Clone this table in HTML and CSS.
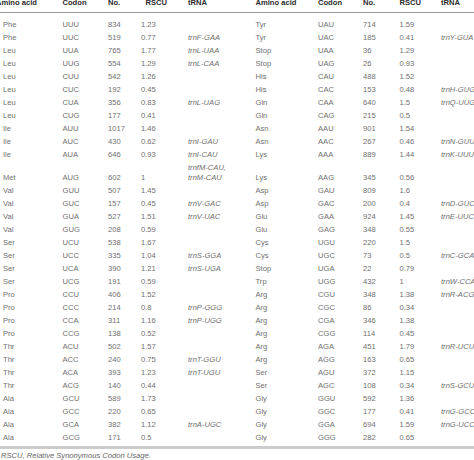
FILE: index.html
```html
<!DOCTYPE html>
<html>
<head>
<meta charset="utf-8">
<link rel="stylesheet" href="styles.css">
</head>
<body>
<div class="page">
<table class="codon">
<colgroup>
<col class="w-aa1"><col class="w-cod"><col class="w-no1"><col class="w-rs1"><col class="w-tr1">
<col class="w-aa2"><col class="w-cod2"><col class="w-no2"><col class="w-rs2"><col class="w-tr2">
</colgroup>
<thead>
<tr>
<th class="aa1">Amino acid</th><th>Codon</th><th>No.</th><th class="rs1">RSCU</th><th>tRNA</th>
<th>Amino acid</th><th>Codon</th><th>No.</th><th>RSCU</th><th>tRNA</th>
</tr>
</thead>
<tbody>
<tr class="first"><td class="aa1">Phe</td><td>UUU</td><td>834</td><td>1.23</td><td class="t"></td><td>Tyr</td><td>UAU</td><td>714</td><td>1.59</td><td class="t"></td></tr>
<tr><td class="aa1">Phe</td><td>UUC</td><td>519</td><td>0.77</td><td class="t">trnF-GAA</td><td>Tyr</td><td>UAC</td><td>185</td><td>0.41</td><td class="t">trnY-GUA</td></tr>
<tr><td class="aa1">Leu</td><td>UUA</td><td>765</td><td>1.77</td><td class="t">trnL-UAA</td><td>Stop</td><td>UAA</td><td>36</td><td>1.29</td><td class="t"></td></tr>
<tr><td class="aa1">Leu</td><td>UUG</td><td>554</td><td>1.29</td><td class="t">trnL-CAA</td><td>Stop</td><td>UAG</td><td>26</td><td>0.93</td><td class="t"></td></tr>
<tr><td class="aa1">Leu</td><td>CUU</td><td>542</td><td>1.26</td><td class="t"></td><td>His</td><td>CAU</td><td>488</td><td>1.52</td><td class="t"></td></tr>
<tr><td class="aa1">Leu</td><td>CUC</td><td>192</td><td>0.45</td><td class="t"></td><td>His</td><td>CAC</td><td>153</td><td>0.48</td><td class="t">trnH-GUG</td></tr>
<tr><td class="aa1">Leu</td><td>CUA</td><td>356</td><td>0.83</td><td class="t">trnL-UAG</td><td>Gln</td><td>CAA</td><td>640</td><td>1.5</td><td class="t">trnQ-UUG</td></tr>
<tr><td class="aa1">Leu</td><td>CUG</td><td>177</td><td>0.41</td><td class="t"></td><td>Gln</td><td>CAG</td><td>215</td><td>0.5</td><td class="t"></td></tr>
<tr><td class="aa1">Ile</td><td>AUU</td><td>1017</td><td>1.46</td><td class="t"></td><td>Asn</td><td>AAU</td><td>901</td><td>1.54</td><td class="t"></td></tr>
<tr><td class="aa1">Ile</td><td>AUC</td><td>430</td><td>0.62</td><td class="t">trnI-GAU</td><td>Asn</td><td>AAC</td><td>267</td><td>0.46</td><td class="t">trnN-GUU</td></tr>
<tr><td class="aa1">Ile</td><td>AUA</td><td>646</td><td>0.93</td><td class="t">trnI-CAU</td><td>Lys</td><td>AAA</td><td>889</td><td>1.44</td><td class="t">trnK-UUU</td></tr>
<tr class="tall"><td class="aa1">Met</td><td>AUG</td><td>602</td><td>1</td><td class="t multi">trnfM-CAU,<br>trnM-CAU</td><td>Lys</td><td>AAG</td><td>345</td><td>0.56</td><td class="t"></td></tr>
<tr><td class="aa1">Val</td><td>GUU</td><td>507</td><td>1.45</td><td class="t"></td><td>Asp</td><td>GAU</td><td>809</td><td>1.6</td><td class="t"></td></tr>
<tr><td class="aa1">Val</td><td>GUC</td><td>157</td><td>0.45</td><td class="t">trnV-GAC</td><td>Asp</td><td>GAC</td><td>200</td><td>0.4</td><td class="t">trnD-GUC</td></tr>
<tr><td class="aa1">Val</td><td>GUA</td><td>527</td><td>1.51</td><td class="t">trnV-UAC</td><td>Glu</td><td>GAA</td><td>924</td><td>1.45</td><td class="t">trnE-UUC</td></tr>
<tr><td class="aa1">Val</td><td>GUG</td><td>208</td><td>0.59</td><td class="t"></td><td>Glu</td><td>GAG</td><td>348</td><td>0.55</td><td class="t"></td></tr>
<tr><td class="aa1">Ser</td><td>UCU</td><td>538</td><td>1.67</td><td class="t"></td><td>Cys</td><td>UGU</td><td>220</td><td>1.5</td><td class="t"></td></tr>
<tr><td class="aa1">Ser</td><td>UCC</td><td>335</td><td>1.04</td><td class="t">trnS-GGA</td><td>Cys</td><td>UGC</td><td>73</td><td>0.5</td><td class="t">trnC-GCA</td></tr>
<tr><td class="aa1">Ser</td><td>UCA</td><td>390</td><td>1.21</td><td class="t">trnS-UGA</td><td>Stop</td><td>UGA</td><td>22</td><td>0.79</td><td class="t"></td></tr>
<tr><td class="aa1">Ser</td><td>UCG</td><td>191</td><td>0.59</td><td class="t"></td><td>Trp</td><td>UGG</td><td>432</td><td>1</td><td class="t">trnW-CCA</td></tr>
<tr><td class="aa1">Pro</td><td>CCU</td><td>406</td><td>1.52</td><td class="t"></td><td>Arg</td><td>CGU</td><td>348</td><td>1.38</td><td class="t">trnR-ACG</td></tr>
<tr><td class="aa1">Pro</td><td>CCC</td><td>214</td><td>0.8</td><td class="t">trnP-GGG</td><td>Arg</td><td>CGC</td><td>86</td><td>0.34</td><td class="t"></td></tr>
<tr><td class="aa1">Pro</td><td>CCA</td><td>311</td><td>1.16</td><td class="t">trnP-UGG</td><td>Arg</td><td>CGA</td><td>346</td><td>1.38</td><td class="t"></td></tr>
<tr><td class="aa1">Pro</td><td>CCG</td><td>138</td><td>0.52</td><td class="t"></td><td>Arg</td><td>CGG</td><td>114</td><td>0.45</td><td class="t"></td></tr>
<tr><td class="aa1">Thr</td><td>ACU</td><td>502</td><td>1.57</td><td class="t"></td><td>Arg</td><td>AGA</td><td>451</td><td>1.79</td><td class="t">trnR-UCU</td></tr>
<tr><td class="aa1">Thr</td><td>ACC</td><td>240</td><td>0.75</td><td class="t">trnT-GGU</td><td>Arg</td><td>AGG</td><td>163</td><td>0.65</td><td class="t"></td></tr>
<tr><td class="aa1">Thr</td><td>ACA</td><td>393</td><td>1.23</td><td class="t">trnT-UGU</td><td>Ser</td><td>AGU</td><td>372</td><td>1.15</td><td class="t"></td></tr>
<tr><td class="aa1">Thr</td><td>ACG</td><td>140</td><td>0.44</td><td class="t"></td><td>Ser</td><td>AGC</td><td>108</td><td>0.34</td><td class="t">trnS-GCU</td></tr>
<tr><td class="aa1">Ala</td><td>GCU</td><td>589</td><td>1.73</td><td class="t"></td><td>Gly</td><td>GGU</td><td>592</td><td>1.36</td><td class="t"></td></tr>
<tr><td class="aa1">Ala</td><td>GCC</td><td>220</td><td>0.65</td><td class="t"></td><td>Gly</td><td>GGC</td><td>177</td><td>0.41</td><td class="t">trnG-GCC</td></tr>
<tr><td class="aa1">Ala</td><td>GCA</td><td>382</td><td>1.12</td><td class="t">trnA-UGC</td><td>Gly</td><td>GGA</td><td>694</td><td>1.59</td><td class="t">trnG-UCC</td></tr>
<tr><td class="aa1">Ala</td><td>GCG</td><td>171</td><td>0.5</td><td class="t"></td><td>Gly</td><td>GGG</td><td>282</td><td>0.65</td><td class="t"></td></tr>
</tbody>
</table>
<div class="rule"></div>
<p class="note">RSCU, Relative Synonymous Codon Usage.</p>
</div>
</body>
</html>
```
FILE: styles.css
```css
html, body {
  margin: 0;
  padding: 0;
  background: #ffffff;
  overflow: hidden;
}
.page {
  width: 474px;
  height: 460px;
  overflow: hidden;
  font-family: "Liberation Sans", Arial, sans-serif;
  font-size: 7.6px;
  color: #707070;
}
.codon {
  table-layout: fixed;
  border-collapse: collapse;
  width: 525px;
  margin-left: -4px;
  margin-top: -2px;
}
.w-aa1 { width: 66.5px; }
.w-cod { width: 45.5px; }
.w-no1 { width: 33px; }
.w-rs1 { width: 47px; }
.w-tr1 { width: 67.5px; }
.w-aa2 { width: 62.5px; }
.w-cod2 { width: 45px; }
.w-no2 { width: 36.5px; }
.w-rs2 { width: 41.5px; }
.w-tr2 { width: 80px; }
.codon th {
  text-align: left;
  font-weight: bold;
  color: #2c2c2c;
  line-height: 10px;
  padding: 0 0 4px 0;
  border-bottom: 1px solid #9c9c9c;
  white-space: nowrap;
}
.codon th.rs1 { padding-left: 4.5px; }
.codon td {
  padding: 0;
  line-height: 13px;
  vertical-align: bottom;
  white-space: nowrap;
}
.codon td.aa1 { padding-left: 7px; }
.codon td.t { font-style: italic; }
.codon tr.first td { padding-top: 4.5px; }
.codon td.multi {
  line-height: 10px;
  padding-top: 2px;
  padding-bottom: 1px;
}
.rule {
  margin-top: 2.5px;
  height: 3px;
  background: #cccccc;
}
.note {
  margin: 2px 0 0 1px;
  line-height: 10px;
  font-style: italic;
  color: #666666;
  white-space: nowrap;
}
```
